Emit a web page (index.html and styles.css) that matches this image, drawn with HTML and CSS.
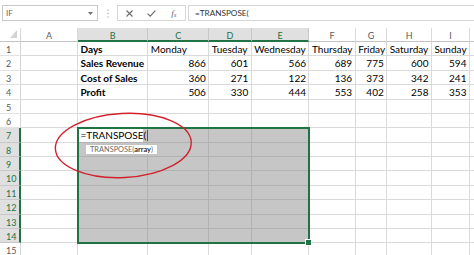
FILE: index.html
```html
<!DOCTYPE html>
<html>
<head>
<meta charset="utf-8">
<link rel="stylesheet" href="styles.css">
</head>
<body>
<div class="app">
  <div class="fbar">
    <div class="namebox">
      <span>IF</span>
      <svg class="nb-arrow" width="5" height="3" viewBox="0 0 5 3"><path d="M0 0H5L2.5 3Z" fill="#707070"/></svg>
    </div>
    <div class="grip">
      <svg width="2" height="9" viewBox="0 0 2 9"><circle cx="1" cy="1" r="0.8" fill="#b8b8b8"/><circle cx="1" cy="4.5" r="0.8" fill="#b8b8b8"/><circle cx="1" cy="8" r="0.8" fill="#b8b8b8"/></svg>
    </div>
    <div class="btns">
      <span class="slot"><svg width="7" height="7" viewBox="0 0 7 7"><path d="M0.5 0.5L6.5 6.5M6.5 0.5L0.5 6.5" stroke="#6a6a6a" stroke-width="1.1" fill="none"/></svg></span>
      <span class="slot"><svg width="9" height="7" viewBox="0 0 9 7"><path d="M0.6 3.6L3.2 6.1L8.4 0.7" stroke="#6a6a6a" stroke-width="1.2" fill="none"/></svg></span>
      <span class="slot fx"><i>f</i><span class="sx">x</span></span>
    </div>
    <div class="formula">=TRANSPOSE(</div>
  </div>

  <div class="sheet">
    <div class="row">
      <div class="c corner"><svg width="7" height="8" viewBox="0 0 7 8"><path d="M7 0V8H0Z" fill="#d3d3d3"/></svg></div>
      <div class="c h">A</div>
      <div class="c h hs">B</div>
      <div class="c h hs">C</div>
      <div class="c h hs">D</div>
      <div class="c h hs">E</div>
      <div class="c h">F</div>
      <div class="c h">G</div>
      <div class="c h">H</div>
      <div class="c h">I</div>
      <div class="c h"></div>
    </div>
    <div class="row">
      <div class="c rh">1</div><div class="c"></div><div class="c b">Days</div><div class="c">Monday</div><div class="c">Tuesday</div><div class="c">Wednesday</div><div class="c">Thursday</div><div class="c">Friday</div><div class="c">Saturday</div><div class="c">Sunday</div><div class="c"></div>
    </div>
    <div class="row">
      <div class="c rh">2</div><div class="c"></div><div class="c b">Sales Revenue</div><div class="c n">866</div><div class="c n">601</div><div class="c n">566</div><div class="c n">689</div><div class="c n">775</div><div class="c n">600</div><div class="c n">594</div><div class="c"></div>
    </div>
    <div class="row">
      <div class="c rh">3</div><div class="c"></div><div class="c b">Cost of Sales</div><div class="c n">360</div><div class="c n">271</div><div class="c n">122</div><div class="c n">136</div><div class="c n">373</div><div class="c n">342</div><div class="c n">241</div><div class="c"></div>
    </div>
    <div class="row">
      <div class="c rh">4</div><div class="c"></div><div class="c b">Profit</div><div class="c n">506</div><div class="c n">330</div><div class="c n">444</div><div class="c n">553</div><div class="c n">402</div><div class="c n">258</div><div class="c n">353</div><div class="c"></div>
    </div>
    <div class="row">
      <div class="c rh">5</div><div class="c"></div><div class="c"></div><div class="c"></div><div class="c"></div><div class="c"></div><div class="c"></div><div class="c"></div><div class="c"></div><div class="c"></div><div class="c"></div>
    </div>
    <div class="row">
      <div class="c rh">6</div><div class="c"></div><div class="c"></div><div class="c"></div><div class="c"></div><div class="c"></div><div class="c"></div><div class="c"></div><div class="c"></div><div class="c"></div><div class="c"></div>
    </div>
    <div class="row">
      <div class="c rh rs">7</div><div class="c"></div>
      <div class="c s editcell"><span class="edit">=TRANSPOSE(<span class="caret"></span></span><div class="tip">TRANSPOSE(<b>array</b>)</div></div>
      <div class="c s"></div><div class="c s"></div><div class="c s"></div><div class="c"></div><div class="c"></div><div class="c"></div><div class="c"></div><div class="c"></div>
    </div>
    <div class="row">
      <div class="c rh rs">8</div><div class="c"></div><div class="c s"></div><div class="c s"></div><div class="c s"></div><div class="c s"></div><div class="c"></div><div class="c"></div><div class="c"></div><div class="c"></div><div class="c"></div>
    </div>
    <div class="row">
      <div class="c rh rs">9</div><div class="c"></div><div class="c s"></div><div class="c s"></div><div class="c s"></div><div class="c s"></div><div class="c"></div><div class="c"></div><div class="c"></div><div class="c"></div><div class="c"></div>
    </div>
    <div class="row">
      <div class="c rh rs">10</div><div class="c"></div><div class="c s"></div><div class="c s"></div><div class="c s"></div><div class="c s"></div><div class="c"></div><div class="c"></div><div class="c"></div><div class="c"></div><div class="c"></div>
    </div>
    <div class="row">
      <div class="c rh rs">11</div><div class="c"></div><div class="c s"></div><div class="c s"></div><div class="c s"></div><div class="c s"></div><div class="c"></div><div class="c"></div><div class="c"></div><div class="c"></div><div class="c"></div>
    </div>
    <div class="row">
      <div class="c rh rs">12</div><div class="c"></div><div class="c s"></div><div class="c s"></div><div class="c s"></div><div class="c s"></div><div class="c"></div><div class="c"></div><div class="c"></div><div class="c"></div><div class="c"></div>
    </div>
    <div class="row">
      <div class="c rh rs">13</div><div class="c"></div><div class="c s"></div><div class="c s"></div><div class="c s"></div><div class="c s"></div><div class="c"></div><div class="c"></div><div class="c"></div><div class="c"></div><div class="c"></div>
    </div>
    <div class="row">
      <div class="c rh rs">14</div><div class="c"></div><div class="c s"></div><div class="c s"></div><div class="c s"></div><div class="c s"></div><div class="c"></div><div class="c"></div><div class="c"></div><div class="c"></div><div class="c"></div>
    </div>
    <div class="row">
      <div class="c rh">15</div><div class="c"></div><div class="c"></div><div class="c"></div><div class="c"></div><div class="c"></div><div class="c"></div><div class="c"></div><div class="c"></div><div class="c"></div><div class="c"></div>
    </div>

    <div class="selbox"><span class="handle"></span></div>
  </div>

  <svg class="ring" width="474" height="255" viewBox="0 0 474 255">
    <ellipse cx="123.3" cy="145.5" rx="68" ry="32" transform="rotate(-3 123.3 145.5)" fill="none" stroke="#d0222c" stroke-width="1.4"/>
  </svg>
</div>
</body>
</html>
```

FILE: styles.css
```css
html, body {
  margin: 0;
  padding: 0;
  background: #ffffff;
  overflow: hidden;
}

body {
  font-family: Lato, "Liberation Sans", sans-serif;
}

.app {
  position: relative;
  width: 474px;
  height: 255px;
  overflow: hidden;
}

/* ---------- formula bar ---------- */
.fbar {
  display: flex;
  align-items: flex-start;
  height: 28px;
  padding: 5px 0 0 2px;
  box-sizing: border-box;
}

.namebox {
  width: 96px;
  height: 16px;
  box-sizing: border-box;
  border: 1px solid #c8c8c8;
  display: flex;
  align-items: center;
  justify-content: space-between;
  padding: 0 4px 0 3px;
  font-size: 8px;
  color: #666;
}

.nb-arrow {
  display: block;
}

.grip {
  width: 19px;
  height: 16px;
  display: flex;
  align-items: center;
  justify-content: center;
}

.grip svg {
  display: block;
}

.btns {
  width: 69px;
  height: 16px;
  box-sizing: border-box;
  border: 1px solid #d6d6d6;
  display: flex;
  align-items: center;
}

.slot {
  width: 23px;
  display: flex;
  justify-content: center;
  align-items: center;
}

.slot svg {
  display: block;
}

.fx {
  font-family: "Liberation Serif", serif;
  font-size: 9px;
  color: #6a6a6a;
}

.fx .sx {
  font-size: 6px;
  font-style: italic;
  position: relative;
  top: 1.5px;
}

.formula {
  flex: 1;
  margin-left: 2px;
  margin-right: -6px;
  height: 16px;
  box-sizing: border-box;
  border: 1px solid #d6d6d6;
  padding-left: 6px;
  font-size: 8.2px;
  line-height: 14px;
  color: #333;
}

/* ---------- sheet ---------- */
.sheet {
  position: relative;
  display: grid;
  grid-template-columns: 21px 57px 70.3px 61px 42.4px 57.8px 46.2px 31.6px 44.7px 38px 40px;
  grid-template-rows: 14px repeat(15, 14.375px);
  font-size: 10px;
  color: #000;
}

.row {
  display: contents;
}

.c {
  box-sizing: border-box;
  border-right: 1px solid #dadada;
  border-bottom: 1px solid #dadada;
  padding: 1px 2.5px 0;
  line-height: 13px;
  white-space: nowrap;
  min-width: 0;
}

.n {
  text-align: right;
}

.b {
  font-weight: 700;
}

.h {
  text-align: center;
  color: #5a5a5a;
  font-size: 9px;
  padding-top: 1px;
  border-bottom-color: #c4c4c4;
}

.hs {
  background: #e0e0e0;
  color: #217346;
  border-bottom: 2px solid #217346;
  border-right-color: #c8c8c8;
}

.corner {
  display: flex;
  align-items: flex-end;
  justify-content: flex-end;
  padding: 0 3px 3px 0;
  border-bottom-color: #c4c4c4;
  border-right-color: #d4d4d4;
}

.corner svg {
  display: block;
}

.rh {
  padding-left: 6px;
  font-size: 9px;
  color: #5a5a5a;
  border-right-color: #d4d4d4;
  border-bottom-color: #e2e2e2;
}

.rs {
  background: #e0e0e0;
  color: #217346;
  border-right: 2px solid #217346;
  border-bottom-color: #c8c8c8;
}

.s {
  background: #c6c6c6;
  border-right-color: #b2b2b2;
  border-bottom-color: #b2b2b2;
}

.editcell {
  position: relative;
  padding: 0;
}

.edit {
  display: inline-block;
  box-sizing: border-box;
  width: 65px;
  height: 100%;
  background: #fff;
  padding: 1px 0 0 2.5px;
  color: #000;
}

.caret {
  display: inline-block;
  width: 1px;
  height: 11px;
  margin-left: 1px;
  background: #555;
  vertical-align: -2px;
}

.tip {
  position: absolute;
  left: 7px;
  top: 16px;
  height: 11px;
  box-sizing: border-box;
  border: 1px solid #c2c2c2;
  background: #fff;
  padding: 0 4px;
  font-size: 7.4px;
  line-height: 9px;
  color: #6a6a6a;
  white-space: nowrap;
  z-index: 3;
}

.tip b {
  color: #333;
  font-weight: 700;
}

.selbox {
  position: absolute;
  grid-column: 3 / 7;
  grid-row: 8 / 16;
  top: -1px;
  left: -1px;
  right: -1px;
  bottom: -1px;
  border: 2px solid #217346;
  z-index: 2;
  pointer-events: none;
}

.handle {
  position: absolute;
  right: -4px;
  bottom: -4px;
  width: 5px;
  height: 5px;
  background: #217346;
  border: 1px solid #fff;
}

.ring {
  position: absolute;
  left: 0;
  top: 0;
  pointer-events: none;
  z-index: 5;
}
```
